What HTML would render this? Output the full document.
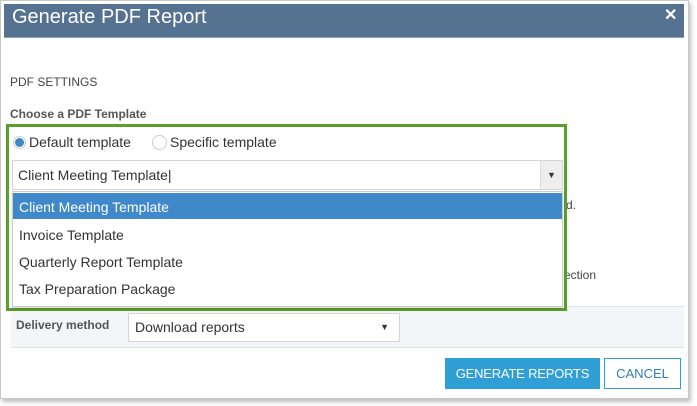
<!DOCTYPE html>
<html><head><style>
*{margin:0;padding:0;box-sizing:border-box}
body{width:697px;height:406px;background:#fff;font-family:"Liberation Sans",sans-serif;position:relative;overflow:hidden;color:#333}
.a{position:absolute}
</style></head><body>
<div class="a" style="left:0;top:0;width:689px;height:399px;border:1px solid #c8c8c8;box-shadow:2px 3px 4px rgba(0,0,0,.25);background:#fff"></div>
<div class="a" style="left:4px;top:4px;width:680px;height:34px;background:#557390;border-bottom:1px solid #8aa0b5"></div>
<div class="a" style="left:12px;top:4px;font-size:20px;color:#fff;line-height:26px">Generate PDF Report</div>
<div class="a" style="left:664px;top:5px;font-size:16px;color:#fff;font-weight:bold">✕</div>
<div class="a" style="left:10px;top:75px;font-size:12px;color:#444">PDF SETTINGS</div>
<div class="a" style="left:10px;top:107px;font-size:12px;color:#555;font-weight:bold">Choose a PDF Template</div>
<div class="a" style="left:566px;top:198px;font-size:12px;color:#444">d.</div>
<div class="a" style="left:564px;top:268px;font-size:12px;color:#444">ection</div>
<div class="a" style="left:11px;top:306px;width:673px;height:42px;background:#f3f5f8;border-top:1px solid #dde2e8;border-bottom:1px solid #dde2e8"></div>
<div class="a" style="left:16px;top:318px;font-size:12px;font-weight:bold;color:#555">Delivery method</div>
<div class="a" style="left:128px;top:313px;width:272px;height:29px;background:#fff;border:1px solid #d5d5d5;font-size:14px;line-height:27px;padding-left:6px;color:#333">Download reports<span class="a" style="right:10px;top:0;font-size:9px">▼</span></div>
<div class="a" style="left:445px;top:358px;width:155px;height:31px;background:#2f9fd6;color:#fff;font-size:13px;text-align:center;line-height:31px;letter-spacing:-0.2px">GENERATE REPORTS</div>
<div class="a" style="left:604px;top:358px;width:77px;height:31px;border:1px solid #2f9fd6;color:#2f7fb6;font-size:13px;text-align:center;line-height:29px;background:#fff">CANCEL</div>
<div class="a" style="left:6px;top:124px;width:561px;height:187px;border:3px solid #5a9e2c;background:#fff"></div>
<div class="a" style="left:13px;top:136px;width:13px;height:13px;border-radius:50%;border:1px solid #ccc;background:#fff"><div class="a" style="left:1px;top:1px;width:9px;height:9px;border-radius:50%;background:#3f88c9"></div></div>
<div class="a" style="left:29px;top:134px;font-size:14px;color:#333">Default template</div>
<div class="a" style="left:152px;top:135px;width:15px;height:15px;border-radius:50%;border:1px solid #ccc"></div>
<div class="a" style="left:170px;top:134px;font-size:14px;color:#333">Specific template</div>
<div class="a" style="left:12px;top:160px;width:551px;height:30px;border:1px solid #d5d5d5;background:#fff;font-size:14px;line-height:28px;padding-left:5px">Client Meeting Template|<div class="a" style="right:0;top:0;width:22px;height:28px;background:#eee;border-left:1px solid #ddd;font-size:9px;text-align:center">▼</div></div>
<div class="a" style="left:12px;top:191px;width:551px;height:116px;border:1px solid #ccc;background:#fff;box-shadow:0 2px 3px rgba(0,0,0,.15)"></div>
<div class="a" style="left:13px;top:193px;width:549px;height:26px;background:#3f88c9"></div>
<div class="a" style="left:19px;top:199px;font-size:14px;color:#fff">Client Meeting Template</div>
<div class="a" style="left:19px;top:227px;font-size:14px">Invoice Template</div>
<div class="a" style="left:19px;top:254px;font-size:14px">Quarterly Report Template</div>
<div class="a" style="left:19px;top:281px;font-size:14px">Tax Preparation Package</div>
</body></html>
